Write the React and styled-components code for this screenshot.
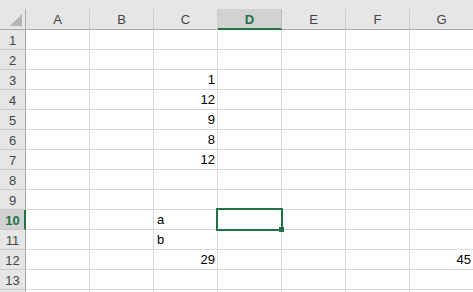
import React from "react";
import styled, { createGlobalStyle, css } from "styled-components";

const GREEN = "#217346";

const Global = createGlobalStyle`
  html, body { margin: 0; padding: 0; background: #ffffff; }
  body { width: 473px; height: 292px; overflow: hidden; font-family: "Liberation Sans", Arial, sans-serif; }
`;

const Sheet = styled.div`
  width: 473px;
  height: 292px;
  overflow: hidden;
  background: #ffffff;
`;

const TopBand = styled.div`
  height: 9px;
  width: 474px;
  background: #e6e6e6;
`;

const Grid = styled.div`
  display: grid;
  grid-template-columns: 26px repeat(7, 64px);
  width: 474px;
`;

const Corner = styled.div`
  height: 21px;
  box-sizing: border-box;
  background: #e6e6e6;
  border-right: 1px solid #ababab;
  border-bottom: 1px solid #ababab;
  display: flex;
  align-items: flex-end;
  justify-content: flex-end;
  padding: 0 3px 3px 0;
`;

const ColHeader = styled.div`
  height: 21px;
  box-sizing: border-box;
  background: ${(p) => (p.$active ? "#d2d2d2" : "#e6e6e6")};
  border-right: 1px solid ${(p) => (p.$active ? "#c0c0c0" : "#cdcdcd")};
  border-bottom: ${(p) => (p.$active ? `2px solid ${GREEN}` : "1px solid #ababab")};
  color: ${(p) => (p.$active ? GREEN : "#444444")};
  font-weight: ${(p) => (p.$active ? 700 : 400)};
  font-size: 13px;
  display: flex;
  align-items: center;
  justify-content: center;
  padding-top: ${(p) => (p.$active ? "1px" : "0")};
`;

const RowHeader = styled.div`
  height: 20px;
  box-sizing: border-box;
  background: ${(p) => (p.$active ? "#d2d2d2" : "#e6e6e6")};
  border-bottom: 1px solid #cacaca;
  border-right: ${(p) => (p.$active ? `2px solid ${GREEN}` : "1px solid #ababab")};
  color: ${(p) => (p.$active ? GREEN : "#444444")};
  font-weight: ${(p) => (p.$active ? 700 : 400)};
  font-size: 13px;
  display: flex;
  align-items: center;
  justify-content: center;
  padding-top: 1px;
  padding-left: ${(p) => (p.$active ? "1px" : "0")};
`;

const Cell = styled.div`
  position: relative;
  height: 20px;
  box-sizing: border-box;
  border-right: 1px solid #d9d9d9;
  border-bottom: 1px solid #d9d9d9;
  font-size: 13px;
  color: #000000;
  display: flex;
  align-items: flex-end;
  padding: 0 2px 2px 3px;
  white-space: nowrap;
  ${(p) =>
    p.$num
      ? css`
          justify-content: flex-end;
        `
      : css`
          justify-content: flex-start;
        `}
`;

const Selection = styled.div`
  position: absolute;
  left: -2px;
  top: -2px;
  width: 67px;
  height: 23px;
  box-sizing: border-box;
  border: 2px solid ${GREEN};
  z-index: 2;
  pointer-events: none;
`;

const FillHandle = styled.div`
  position: absolute;
  left: 61px;
  top: 17px;
  width: 5px;
  height: 5px;
  background: ${GREEN};
`;

const cols = ["A", "B", "C", "D", "E", "F", "G"];

const data = {
  3: { C: 1 },
  4: { C: 12 },
  5: { C: 9 },
  6: { C: 8 },
  7: { C: 12 },
  10: { C: "a" },
  11: { C: "b" },
  12: { C: 29, G: 45 },
};

export default function App() {
  const rows = Array.from({ length: 14 }, (_, i) => i + 1);
  return (
    <Sheet>
      <Global />
      <TopBand />
      <Grid>
        <Corner>
          <svg width="12" height="12" viewBox="0 0 12 12">
            <polygon points="12,0 12,12 0,12" fill="#b5b5b5" />
          </svg>
        </Corner>
        {cols.map((c) => (
          <ColHeader key={c} $active={c === "D"}>
            {c}
          </ColHeader>
        ))}
        {rows.map((r) => (
          <React.Fragment key={r}>
            <RowHeader $active={r === 10}>{r <= 13 ? r : ""}</RowHeader>
            {cols.map((c) => {
              const v = data[r] && data[r][c];
              const isSel = r === 10 && c === "D";
              return (
                <Cell key={c} $num={typeof v === "number"}>
                  {v !== undefined ? v : ""}
                  {isSel && (
                    <Selection>
                      <FillHandle />
                    </Selection>
                  )}
                </Cell>
              );
            })}
          </React.Fragment>
        ))}
      </Grid>
    </Sheet>
  );
}
